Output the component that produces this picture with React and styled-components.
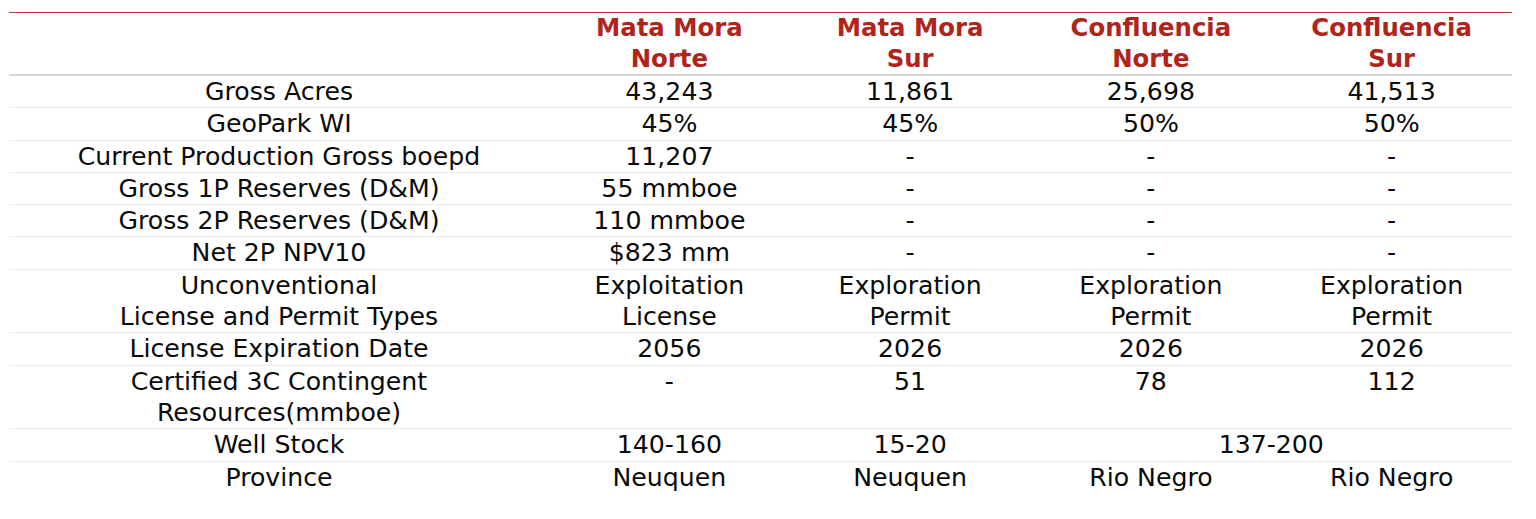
import React from "react";
import styled, { createGlobalStyle } from "styled-components";

const Global = createGlobalStyle`
  html, body { margin: 0; padding: 0; background: #ffffff; }
  body { font-family: "DejaVu Sans", Verdana, Tahoma, sans-serif; }
`;

const Page = styled.div`
  padding: 12px 0 0 9px;
`;

const Table = styled.table`
  width: 1503px;
  border-collapse: collapse;
  table-layout: fixed;
  font-family: "DejaVu Sans", Verdana, Tahoma, sans-serif;
  font-size: 25.2px;
  color: #0a0a0a;
`;

const HeadRow = styled.tr`
  border-top: 1px solid #c8393a;
  border-bottom: 2px solid #d6d6d6;
`;

const HeadCell = styled.th`
  padding: 0;
  font-weight: bold;
  font-size: 24.4px;
  color: #b1241b;
  line-height: 30.5px;
  text-align: center;
  vertical-align: top;
`;

const Row = styled.tr`
  border-bottom: ${(p) => (p.$last ? "none" : "1px solid #ececec")};
`;

const Cell = styled.td`
  padding: 0;
  line-height: 31.3px;
  text-align: center;
  vertical-align: top;
  white-space: pre-line;
`;

const columns = [
  "Mata Mora\nNorte",
  "Mata Mora\nSur",
  "Confluencia\nNorte",
  "Confluencia\nSur",
];

const rows = [
  ["Gross Acres", "43,243", "11,861", "25,698", "41,513"],
  ["GeoPark WI", "45%", "45%", "50%", "50%"],
  ["Current Production Gross boepd", "11,207", "-", "-", "-"],
  ["Gross 1P Reserves (D&M)", "55 mmboe", "-", "-", "-"],
  ["Gross 2P Reserves (D&M)", "110 mmboe", "-", "-", "-"],
  ["Net 2P NPV10", "$823 mm", "-", "-", "-"],
  [
    "Unconventional\nLicense and Permit Types",
    "Exploitation\nLicense",
    "Exploration\nPermit",
    "Exploration\nPermit",
    "Exploration\nPermit",
  ],
  ["License Expiration Date", "2056", "2026", "2026", "2026"],
  ["Certified 3C Contingent\nResources(mmboe)", "-", "51", "78", "112"],
  ["Well Stock", "140-160", "15-20", { text: "137-200", span: 2 }],
  ["Province", "Neuquen", "Neuquen", "Rio Negro", "Rio Negro"],
];

export default function App() {
  return (
    <Page>
      <Global />
      <Table>
        <colgroup>
          <col style={{ width: "540px" }} />
          <col />
          <col />
          <col />
          <col />
        </colgroup>
        <thead>
          <HeadRow>
            <HeadCell />
            {columns.map((c) => (
              <HeadCell key={c}>
                {c.split("\n").map((l, i) => (
                  <div key={i}>{l}</div>
                ))}
              </HeadCell>
            ))}
          </HeadRow>
        </thead>
        <tbody>
          {rows.map((r, ri) => (
            <Row key={ri} $last={ri === rows.length - 1}>
              {r.map((c, ci) =>
                typeof c === "string" ? (
                  <Cell key={ci}>{c}</Cell>
                ) : (
                  <Cell key={ci} colSpan={c.span}>
                    {c.text}
                  </Cell>
                )
              )}
            </Row>
          ))}
        </tbody>
      </Table>
    </Page>
  );
}
